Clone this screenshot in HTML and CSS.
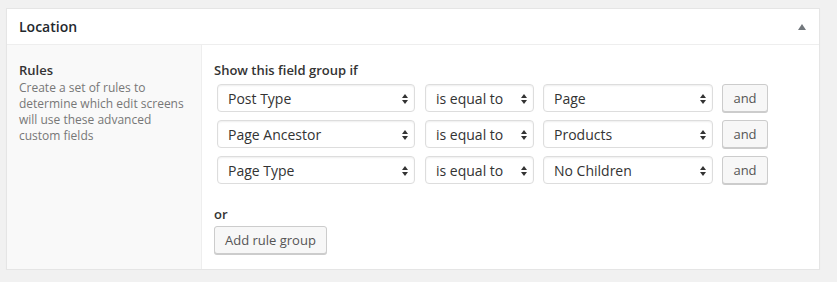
FILE: index.html
```html
<!DOCTYPE html>
<html>
<head>
<meta charset="utf-8">
<link rel="stylesheet" href="styles.css">
</head>
<body>
<div class="postbox">
  <div class="hndle">
    <h2 class="title">Location</h2>
    <span class="toggle"><svg width="8" height="6" viewBox="0 0 8 6"><path d="M0 6 L4 0 L8 6 Z" fill="#72777c"/></svg></span>
  </div>
  <div class="inside">
    <div class="label-col">
      <div class="label">Rules</div>
      <p class="desc">Create a set of rules to determine which edit screens will use these advanced custom fields</p>
    </div>
    <div class="input-col">
      <div class="group-title">Show this field group if</div>
      <div class="rules">
        <div class="rule">
          <div class="sel w1"><span>Post Type</span><svg class="arr" width="6" height="10" viewBox="0 0 6 10"><path d="M0 4 L3 0 L6 4 Z M0 6 L3 10 L6 6 Z" fill="#333"/></svg></div>
          <div class="sel w2"><span>is equal to</span><svg class="arr" width="6" height="10" viewBox="0 0 6 10"><path d="M0 4 L3 0 L6 4 Z M0 6 L3 10 L6 6 Z" fill="#333"/></svg></div>
          <div class="sel w3"><span>Page</span><svg class="arr" width="6" height="10" viewBox="0 0 6 10"><path d="M0 4 L3 0 L6 4 Z M0 6 L3 10 L6 6 Z" fill="#333"/></svg></div>
          <button class="btn and">and</button>
        </div>
        <div class="rule">
          <div class="sel w1"><span>Page Ancestor</span><svg class="arr" width="6" height="10" viewBox="0 0 6 10"><path d="M0 4 L3 0 L6 4 Z M0 6 L3 10 L6 6 Z" fill="#333"/></svg></div>
          <div class="sel w2"><span>is equal to</span><svg class="arr" width="6" height="10" viewBox="0 0 6 10"><path d="M0 4 L3 0 L6 4 Z M0 6 L3 10 L6 6 Z" fill="#333"/></svg></div>
          <div class="sel w3"><span>Products</span><svg class="arr" width="6" height="10" viewBox="0 0 6 10"><path d="M0 4 L3 0 L6 4 Z M0 6 L3 10 L6 6 Z" fill="#333"/></svg></div>
          <button class="btn and">and</button>
        </div>
        <div class="rule">
          <div class="sel w1"><span>Page Type</span><svg class="arr" width="6" height="10" viewBox="0 0 6 10"><path d="M0 4 L3 0 L6 4 Z M0 6 L3 10 L6 6 Z" fill="#333"/></svg></div>
          <div class="sel w2"><span>is equal to</span><svg class="arr" width="6" height="10" viewBox="0 0 6 10"><path d="M0 4 L3 0 L6 4 Z M0 6 L3 10 L6 6 Z" fill="#333"/></svg></div>
          <div class="sel w3"><span>No Children</span><svg class="arr" width="6" height="10" viewBox="0 0 6 10"><path d="M0 4 L3 0 L6 4 Z M0 6 L3 10 L6 6 Z" fill="#333"/></svg></div>
          <button class="btn and">and</button>
        </div>
      </div>
      <div class="or">or</div>
      <button class="btn add">Add rule group</button>
    </div>
  </div>
</div>
</body>
</html>
```
FILE: styles.css
```css
html, body {
  margin: 0;
  padding: 0;
  background: #f1f1f1;
}
body {
  font-family: "Open Sans", "Liberation Sans", sans-serif;
  font-size: 13px;
  color: #444;
  padding: 8px 16px 0 6px;
}
.postbox {
  width: 814px;
  height: 262px;
  box-sizing: border-box;
  background: #fff;
  border: 1px solid #e5e5e5;
  box-shadow: 0 1px 1px rgba(0,0,0,0.04);
  display: flex;
  flex-direction: column;
}
.hndle {
  height: 36px;
  box-sizing: border-box;
  border-bottom: 1px solid #eee;
  display: flex;
  align-items: center;
  justify-content: space-between;
  padding: 0 13px 0 12px;
}
.title {
  margin: 0;
  font-size: 14px;
  font-weight: 600;
  color: #23282d;
}
.toggle {
  display: flex;
  padding-top: 1px;
}
.inside {
  flex: 1;
  display: flex;
}
.label-col {
  width: 195px;
  box-sizing: border-box;
  background: #f9f9f9;
  border-right: 1px solid #eee;
  padding: 15px 10px 15px 12px;
}
.label {
  font-weight: 600;
  color: #333;
  line-height: 20px;
}
.desc {
  margin: 0;
  color: #777;
  line-height: 16px;
  font-size: 12px;
}
.input-col {
  flex: 1;
  padding: 15px 12px;
}
.group-title {
  font-weight: 600;
  color: #333;
  line-height: 20px;
}
.rules {
  display: flex;
  flex-direction: column;
  gap: 8px;
  margin-top: 4px;
  padding-left: 3px;
}
.rule {
  display: flex;
  align-items: center;
  gap: 9px;
}
.sel {
  height: 28px;
  box-sizing: border-box;
  border: 1px solid #ddd;
  border-radius: 4px;
  box-shadow: inset 0 1px 2px rgba(0,0,0,0.07);
  background: #fff;
  display: flex;
  align-items: center;
  justify-content: space-between;
  padding: 0 6px 0 10px;
  font-size: 14px;
  color: #333;
}
.arr {
  margin-top: 1px;
}
.w1 { width: 198px; }
.w2 { width: 109px; margin-left: 1px; }
.w3 { width: 170px; }
.btn {
  font-family: "Open Sans", "Liberation Sans", sans-serif;
  font-size: 13px;
  color: #555;
  background: #f7f7f7;
  border: 1px solid #ccc;
  border-radius: 3px;
  box-shadow: 0 1px 0 #ccc;
  height: 28px;
  padding: 0 10px;
  margin: 0;
  cursor: pointer;
}
.and {
  width: 46px;
  padding: 0;
}
.or {
  font-weight: 600;
  color: #333;
  margin-top: 20px;
  line-height: 20px;
}
.add {
  margin-top: 2px;
  padding: 0 10px;
}
```
